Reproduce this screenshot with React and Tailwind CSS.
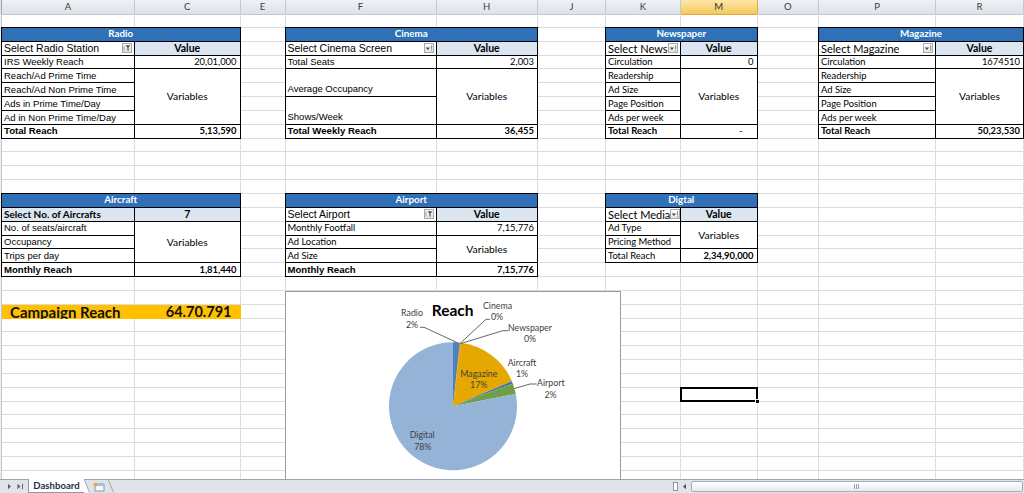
import React from "react";

const AR = "font-['Liberation_Sans',Arial,sans-serif]";
const LA = "font-['Lato','Noto_Sans',sans-serif]";

const COLS = ["", "A", "C", "E", "F", "H", "J", "K", "M", "O", "P", "R"];
const ROWS = 34;
const TEMPLATE =
  "grid-cols-[2px_133px_105.5px_45px_151px_101.5px_68px_75px_76.5px_61.5px_117px_88px]";

function FilterBtn({ kind }) {
  return (
    <span className="ml-auto mr-[2px] flex h-[10px] w-[10px] shrink-0 items-center justify-center border border-[#a9a9a9] bg-linear-to-b from-white to-[#e2e2e2]">
      {kind === "funnel" ? (
        <svg width="8" height="8" viewBox="0 0 8 8">
          <path d="M1 1.5 V6.5" stroke="#8a8a8a" strokeWidth="0.8" />
          <path d="M2.5 1.2 H7.5 L5.6 3.6 V7 L4.4 6.2 V3.6 Z" fill="#505050" />
        </svg>
      ) : (
        <svg width="8" height="8" viewBox="0 0 8 8">
          <path d="M0.8 3.6 H5 L2.9 5.9 Z" fill="#4a4a4a" />
          <path d="M6.6 1.2 V5.2" stroke="#7a7a7a" strokeWidth="0.9" />
          <rect x="6.15" y="6" width="0.9" height="0.9" fill="#7a7a7a" />
        </svg>
      )}
    </span>
  );
}

function C({ className = "", bg = "bg-white", children }) {
  return (
    <div
      className={`flex items-center overflow-hidden whitespace-nowrap border-r border-b border-black leading-none text-black ${bg} ${className}`}
    >
      {children}
    </div>
  );
}

function Table({ pos, cols, children }) {
  return (
    <div
      className={`relative z-10 -ml-px -mt-px grid auto-rows-[13.85px] border-l border-t border-black ${cols}`}
      style={pos}
    >
      {children}
    </div>
  );
}

const title = `col-span-2 justify-center font-bold text-white text-[9.8px] ${LA}`;
const TB = "bg-[#2f70b6]";
const LB = "bg-[#dce6f1]";
const valueHdr = `justify-center font-bold text-[10.5px] ${LA}`;
const arLbl = `pl-[2px] text-[9.5px] ${AR}`;
const arBold = `pl-[2px] font-bold text-[9.6px] ${AR}`;
const laLbl = `pl-[2px] text-[9.4px] ${LA}`;
const laBold = `pl-[2px] font-bold text-[9.6px] ${LA}`;
const num = `justify-end pr-[3px] text-[9.4px] ${LA}`;
const numBold = `justify-end pr-[3px] font-bold text-[9.4px] ${LA}`;
const vars = `justify-center text-[10.3px] ${LA}`;
const selAr = `pl-[2px] text-[10.5px] ${AR}`;
const selLa = `pl-[2px] text-[11px] ${LA}`;

function Pie() {
  const cx = 167;
  const cy = 115.2;
  const r = 64;
  const pt = (deg) => {
    const a = (deg * Math.PI) / 180;
    return [cx + r * Math.sin(a), cy - r * Math.cos(a)];
  };
  const slices = [
    { a0: 0, a1: 6.17, fill: "#4f81bd" },
    { a0: 6.17, a1: 6.61, fill: "#c0504d" },
    { a0: 6.61, a1: 66.97, fill: "#e5a800" },
    { a0: 66.97, a1: 69.15, fill: "#3d6fb3" },
    { a0: 69.15, a1: 79, fill: "#6f9f45" },
    { a0: 79, a1: 360, fill: "#95b3d7" },
  ];
  const path = ({ a0, a1 }) => {
    const [x0, y0] = pt(a0);
    const [x1, y1] = pt(a1 === 360 ? 359.999 : a1);
    const large = a1 - a0 > 180 ? 1 : 0;
    return `M${cx} ${cy} L${x0} ${y0} A${r} ${r} 0 ${large} 1 ${x1} ${y1} Z`;
  };
  const lbl = { fontFamily: "Lato, sans-serif", fontSize: 8.8, fill: "#404040" };
  const labels = [
    ["Radio", 126, 25],
    ["2%", 126, 36.7],
    ["Cinema", 211.5, 18],
    ["0%", 211, 29],
    ["Newspaper", 244, 39.7],
    ["0%", 244, 50.7],
    ["Aircraft", 236, 75],
    ["1%", 236, 86.3],
    ["Airport", 264.8, 95.3],
    ["2%", 264.5, 106.7],
    ["Magazine", 192.8, 85.7],
    ["17%", 192.7, 96.7],
    ["Digital", 136.2, 147.3],
    ["78%", 136.8, 159],
  ];
  return (
    <svg className="absolute left-0 top-[-1px]" width="334" height="200" viewBox="0 0 334 200">
      {slices.map((s, i) => (
        <path key={i} d={path(s)} fill={s.fill} />
      ))}
      <g stroke="#404040" strokeWidth="0.8" fill="none">
        <polyline points="134,36.3 138,36.3 171,51.5" />
        <polyline points="204,28.3 200,28.3 174.5,52" />
        <polyline points="222.3,39.7 216.7,39.7 174.8,52.5" />
        <polyline points="250.7,93 244,93 228.5,97.5" />
      </g>
      <text x="145.7" y="24.7" style={{ fontFamily: "Lato, sans-serif", fontSize: 15.5, fontWeight: 700, fill: "#000" }}>
        Reach
      </text>
      {labels.map(([t, x, y], i) => (
        <text key={i} x={x} y={y} textAnchor="middle" style={lbl}>
          {t}
        </text>
      ))}
    </svg>
  );
}

export default function App() {
  return (
    <div className="relative h-[493px] w-[1024px] overflow-hidden bg-white">
      {/* column headers */}
      <div className={`grid h-[14px] ${TEMPLATE}`}>
        {COLS.map((c, i) => (
          <div
            key={i}
            className={
              i === 0
                ? "border-r border-b border-[#9da6b0] bg-[#dfe3e8]"
                : c === "M"
                ? `flex items-center justify-center border-r border-b border-[#e2a83b] bg-linear-to-b from-[#fde7a6] to-[#f6c75c] text-[9.5px] text-[#333] ${LA}`
                : `flex items-center justify-center border-r border-b border-[#c2c8cf] bg-linear-to-b from-[#eef1f5] to-[#dde2e8] text-[9.5px] text-[#3c3c3c] ${LA}`
            }
          >
            {c}
          </div>
        ))}
      </div>

      {/* sheet body */}
      <div className="relative h-[465px] overflow-hidden">
        <div className={`grid auto-rows-[13.85px] ${TEMPLATE}`}>
          {Array.from({ length: ROWS }).map((_, r) =>
            COLS.map((c, ci) => (
              <div
                key={`${r}-${ci}`}
                style={{ gridRow: r + 1, gridColumn: ci + 1 }}
                className={ci === 0 ? "border-r border-[#c3c9d0] bg-[#eceff3]" : "border-r border-b border-[#dcdcdc]"}
              />
            ))
          )}

          {/* Radio */}
          <Table pos={{ gridColumn: "2 / span 2", gridRow: "2 / span 8" }} cols="grid-cols-[133px_105.5px]">
            <C bg={TB} className={title}>Radio</C>
            <C className={selAr}>
              Select Radio Station
              <FilterBtn kind="funnel" />
            </C>
            <C bg={LB} className={valueHdr}>Value</C>
            <C className={arLbl}>IRS Weekly Reach</C>
            <C className={num}>20,01,000</C>
            <C className={arLbl}>Reach/Ad Prime Time</C>
            <C className={`row-span-4 ${vars}`}>Variables</C>
            <C className={arLbl}>Reach/Ad Non Prime Time</C>
            <C className={arLbl}>Ads in Prime Time/Day</C>
            <C className={arLbl}>Ad in Non Prime Time/Day</C>
            <C className={arBold}>Total Reach</C>
            <C className={numBold}>5,13,590</C>
          </Table>

          {/* Cinema */}
          <Table pos={{ gridColumn: "5 / span 2", gridRow: "2 / span 8" }} cols="grid-cols-[151px_101.5px]">
            <C bg={TB} className={title}>Cinema</C>
            <C className={selAr}>
              Select Cinema Screen
              <FilterBtn kind="drop" />
            </C>
            <C bg={LB} className={valueHdr}>Value</C>
            <C className={arLbl}>Total Seats</C>
            <C className={num}>2,003</C>
            <C className={`row-span-2 !items-end pb-[2.5px] ${arLbl}`}>Average Occupancy</C>
            <C className={`row-span-4 ${vars}`}>Variables</C>
            <C className={`row-span-2 !items-end pb-[2.5px] ${arLbl}`}>Shows/Week</C>
            <C className={arBold}>Total Weekly Reach</C>
            <C className={numBold}>36,455</C>
          </Table>

          {/* Newspaper */}
          <Table pos={{ gridColumn: "8 / span 2", gridRow: "2 / span 8" }} cols="grid-cols-[75px_76.5px]">
            <C bg={TB} className={title}>Newspaper</C>
            <C className={selLa}>
              Select News
              <FilterBtn kind="drop" />
            </C>
            <C bg={LB} className={valueHdr}>Value</C>
            <C className={laLbl}>Circulation</C>
            <C className={num}>0</C>
            <C className={laLbl}>Readership</C>
            <C className={`row-span-4 ${vars}`}>Variables</C>
            <C className={laLbl}>Ad Size</C>
            <C className={laLbl}>Page Position</C>
            <C className={laLbl}>Ads per week</C>
            <C className={laBold}>Total Reach</C>
            <C className={`justify-end pr-[14px] text-[9.4px] ${LA}`}>-</C>
          </Table>

          {/* Magazine */}
          <Table pos={{ gridColumn: "11 / span 2", gridRow: "2 / span 8" }} cols="grid-cols-[117px_88px]">
            <C bg={TB} className={title}>Magazine</C>
            <C className={selLa}>
              Select Magazine
              <FilterBtn kind="drop" />
            </C>
            <C bg={LB} className={valueHdr}>Value</C>
            <C className={laLbl}>Circulation</C>
            <C className={num}>1674510</C>
            <C className={laLbl}>Readership</C>
            <C className={`row-span-4 ${vars}`}>Variables</C>
            <C className={laLbl}>Ad Size</C>
            <C className={laLbl}>Page Position</C>
            <C className={laLbl}>Ads per week</C>
            <C className={laBold}>Total Reach</C>
            <C className={numBold}>50,23,530</C>
          </Table>

          {/* Aircraft */}
          <Table pos={{ gridColumn: "2 / span 2", gridRow: "14 / span 6" }} cols="grid-cols-[133px_105.5px]">
            <C bg={TB} className={title}>Aircraft</C>
            <C bg={LB} className={`pl-[2px] font-bold text-[10px] ${LA}`}>Select No. of Aircrafts</C>
            <C bg={LB} className={`justify-center font-bold text-[10.5px] ${LA}`}>7</C>
            <C className={arLbl}>No. of seats/aircraft</C>
            <C className={`row-span-3 ${vars}`}>Variables</C>
            <C className={arLbl}>Occupancy</C>
            <C className={arLbl}>Trips per day</C>
            <C className={arBold}>Monthly Reach</C>
            <C className={numBold}>1,81,440</C>
          </Table>

          {/* Airport */}
          <Table pos={{ gridColumn: "5 / span 2", gridRow: "14 / span 6" }} cols="grid-cols-[151px_101.5px]">
            <C bg={TB} className={title}>Airport</C>
            <C className={selAr}>
              Select Airport
              <FilterBtn kind="funnel" />
            </C>
            <C bg={LB} className={valueHdr}>Value</C>
            <C className={laLbl}>Monthly Footfall</C>
            <C className={num}>7,15,776</C>
            <C className={laLbl}>Ad Location</C>
            <C className={`row-span-2 ${vars}`}>Variables</C>
            <C className={laLbl}>Ad Size</C>
            <C className={arBold}>Monthly Reach</C>
            <C className={numBold}>7,15,776</C>
          </Table>

          {/* Digital */}
          <Table pos={{ gridColumn: "8 / span 2", gridRow: "14 / span 5" }} cols="grid-cols-[75px_76.5px]">
            <C bg={TB} className={title}>Digtal</C>
            <C className={selLa}>
              Select Media
              <FilterBtn kind="drop" />
            </C>
            <C bg={LB} className={valueHdr}>Value</C>
            <C className={laLbl}>Ad Type</C>
            <C className={`row-span-2 ${vars}`}>Variables</C>
            <C className={laLbl}>Pricing Method</C>
            <C className={laLbl}>Total Reach</C>
            <C className={numBold}>2,34,90,000</C>
          </Table>

          {/* Campaign reach */}
          <div
            style={{ gridColumn: "2 / span 2", gridRow: "22" }}
            className={`relative z-10 flex items-end justify-between overflow-hidden bg-[#ffc000] pl-[8px] pr-[9px] font-bold text-[15px] leading-none text-[#111] ${LA}`}
          >
            <span className="translate-y-[1px]">Campaign Reach</span>
            <span className="translate-y-[1px] text-[14.5px]">64.70.791</span>
          </div>
        </div>

        {/* chart object */}
        <div className="absolute left-[285px] top-[277px] z-20 h-[200px] w-[336px] border border-[#9a9a9a] bg-white">
          <Pie />
        </div>

        {/* active cell */}
        <div className="absolute left-[680px] top-[373px] z-20 h-[15px] w-[78px] border-2 border-black">
          <div className="absolute -bottom-[4px] -right-[4px] h-[5px] w-[5px] border border-white bg-black" />
        </div>
      </div>

      {/* sheet tab bar */}
      <div className="flex h-[14px] items-stretch border-t border-[#9aa5b1] bg-[#dfe4ea]">
        <div className="flex w-[28px] items-center gap-[5px] pl-[7px]">
          <svg width="5" height="7" viewBox="0 0 5 7">
            <path d="M1 0.8 L4 3.5 L1 6.2 Z" fill="#5a6470" />
          </svg>
          <svg width="7" height="7" viewBox="0 0 7 7">
            <path d="M0.5 0.8 L3.5 3.5 L0.5 6.2 Z" fill="#5a6470" />
            <rect x="5" y="0.8" width="1" height="5.4" fill="#5a6470" />
          </svg>
        </div>
        <div className={`-mt-px flex w-[56px] items-center justify-center border-l border-b border-[#8d99a6] bg-white text-[9.6px] font-bold leading-none text-[#1d2f4a] ${LA}`}>
          Dashboard
        </div>
        <svg width="6" height="14" viewBox="0 0 6 14" className="-mt-px">
          <path d="M0 0 L0 13.5 L5.5 13.5 Z" fill="#ffffff" />
          <path d="M0 0 L5.5 13.5" stroke="#8d99a6" strokeWidth="0.8" />
        </svg>
        <div className="flex w-[18px] items-center justify-center">
          <svg width="12" height="10" viewBox="0 0 12 10">
            <rect x="2" y="2" width="9" height="7" fill="#f4f7fb" stroke="#6d86a8" strokeWidth="0.8" />
            <rect x="2" y="2" width="9" height="2" fill="#a9c0dc" />
            <circle cx="2.5" cy="2.5" r="2" fill="#f0a830" />
          </svg>
        </div>
        <svg width="6" height="14" viewBox="0 0 6 14" className="-mt-px">
          <path d="M0 0 L5.5 13.5" stroke="#8d99a6" strokeWidth="0.8" />
        </svg>
        <div className="flex-1" />
        <div className="flex w-[351.5px] items-center">
          <div className="h-[9px] w-[5px] border border-[#8a96a3] bg-white" />
          <div className="flex w-[13px] items-center justify-center">
            <svg width="5" height="7" viewBox="0 0 5 7">
              <path d="M4 0.8 L1 3.5 L4 6.2 Z" fill="#4a5461" />
            </svg>
          </div>
          <div className="flex h-[11px] w-[332px] items-center justify-center rounded-[2px] border border-[#a3aebb] bg-linear-to-b from-white to-[#e6ebf1]">
            <svg width="6" height="5" viewBox="0 0 6 5">
              <path d="M0.5 0 V5 M2.5 0 V5 M4.5 0 V5" stroke="#8a96a3" strokeWidth="0.9" />
            </svg>
          </div>
        </div>
      </div>
    </div>
  );
}
